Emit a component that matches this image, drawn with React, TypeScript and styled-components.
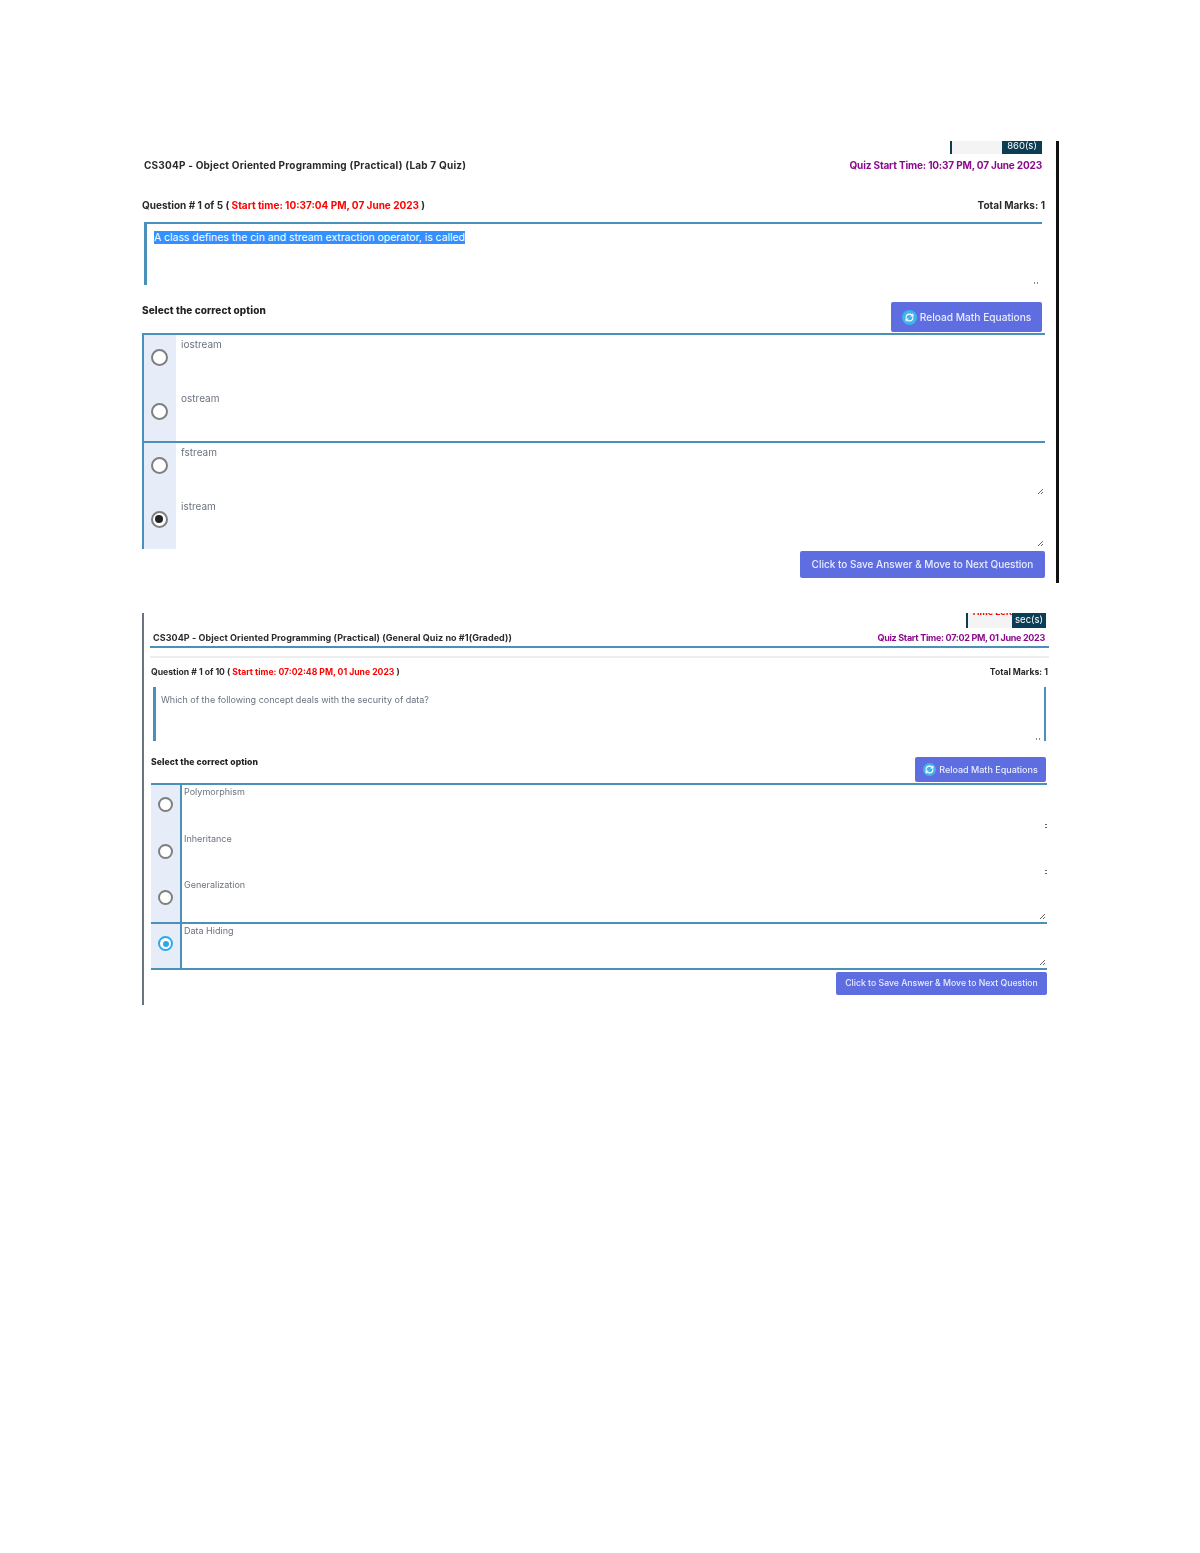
import React from 'react';
import styled, {createGlobalStyle, ThemeProvider} from 'styled-components';
import {RefreshCw} from 'lucide-react';

const GlobalStyle = createGlobalStyle`
  html, body {
    margin: 0;
    padding: 0;
    background: #fff;
  }
  body {
    font-family: Inter, "Noto Sans", "Liberation Sans", sans-serif;
  }
`;

const BLUE = '#4a90b8';

const Page = styled.div`
  box-sizing: border-box;
  width: 1200px;
  height: 1553px;
  padding: 141px 0 0 142px;
  filter: blur(0.55px);
`;

const Panel = styled.section`
  box-sizing: border-box;
  width: ${(p) => p.theme.width}px;
  height: ${(p) => p.theme.height}px;
  margin-bottom: 30px;
  border-left: ${(p) => p.theme.panelLeft};
  border-right: ${(p) => p.theme.panelRight};
`;

const TagRow = styled.div`
  display: flex;
  justify-content: flex-end;
  height: ${(p) => p.theme.tagH}px;
  padding-right: ${(p) => p.theme.tagRight}px;
`;
const Tag = styled.div`
  display: flex;
  overflow: hidden;
  width: ${(p) => p.theme.tagW}px;
  border-left: 2px solid #0b3d55;
  background: #f4f4f4;
`;
const TagHint = styled.span`
  flex: 1;
  margin-top: -6.5px;
  padding-left: 3px;
  font-size: 9px;
  line-height: 10px;
  font-weight: 700;
  color: #f00;
  white-space: nowrap;
`;
const TagValue = styled.span`
  width: ${(p) => p.theme.tagValueW}px;
  background: #0b3d55;
  color: #fff;
  font-size: 9.5px;
  line-height: ${(p) => p.theme.tagLine}px;
  text-align: center;
`;

const TitleRow = styled.div`
  display: flex;
  justify-content: space-between;
  align-items: center;
  box-sizing: border-box;
  height: ${(p) => p.theme.titleH}px;
  margin-left: ${(p) => p.theme.titleLeft}px;
  padding: ${(p) => p.theme.titlePad};
  border-bottom: ${(p) => p.theme.titleLine};
`;
const Title = styled.div`
  font-size: ${(p) => p.theme.titleSize}px;
  font-weight: 700;
  letter-spacing: ${(p) => p.theme.titleTrack}px;
  color: #2a2a2a;
  white-space: nowrap;
`;
const QuizTime = styled.div`
  font-size: ${(p) => p.theme.titleSize}px;
  font-weight: 700;
  letter-spacing: ${(p) => p.theme.timeTrack}px;
  color: #8b0a8b;
  white-space: nowrap;
`;
const Rule = styled.div`
  display: ${(p) => p.theme.ruleShow};
  height: 2px;
  margin: 8px 0 0 6px;
  background: #eeeeee;
`;

const QuestionRow = styled.div`
  display: flex;
  justify-content: space-between;
  align-items: center;
  height: 16px;
  margin: ${(p) => p.theme.questionMargin};
  font-size: ${(p) => p.theme.questionSize}px;
  font-weight: 700;
  color: #2a2a2a;
  white-space: nowrap;
`;
const StartTime = styled.span`
  color: #f00;
`;

const QuestionBox = styled.div`
  position: relative;
  box-sizing: border-box;
  height: ${(p) => p.theme.boxH}px;
  margin: ${(p) => p.theme.boxMargin};
  padding: ${(p) => p.theme.boxPad};
  border-left: 3px solid ${BLUE};
  border-top: ${(p) => p.theme.boxTop};
  border-right: ${(p) => p.theme.boxRight};
  font-size: ${(p) => p.theme.boxSize}px;
  line-height: 14px;
  color: #6b7280;
`;
const Selected = styled.span`
  background: #3390ff;
  color: #fff;
`;

const SelectRow = styled.div`
  display: flex;
  justify-content: space-between;
  align-items: flex-start;
  height: ${(p) => p.theme.selectH}px;
  margin: ${(p) => p.theme.selectMargin};
`;
const SelectLabel = styled.div`
  font-size: ${(p) => p.theme.questionSize}px;
  font-weight: 800;
  letter-spacing: 0.08px;
  line-height: ${(p) => p.theme.selectLine}px;
  color: #222;
`;
const Button = styled.button`
  display: flex;
  align-items: center;
  justify-content: center;
  box-sizing: border-box;
  padding: 0;
  border: 0;
  border-radius: 2px;
  background: #5e6ee0;
  color: #e8ecff;
  font-family: inherit;
  font-weight: 500;
  white-space: nowrap;
`;
const ReloadButton = styled(Button)`
  gap: 3px;
  width: ${(p) => p.theme.reloadW}px;
  height: ${(p) => p.theme.selectH}px;
  font-size: ${(p) => p.theme.reloadSize}px;
`;
const ReloadIcon = styled.span`
  display: flex;
  align-items: center;
  justify-content: center;
  width: ${(p) => p.theme.reloadIcon}px;
  height: ${(p) => p.theme.reloadIcon}px;
  border-radius: 50%;
  background: #3fb4ec;
  color: #fff;
`;

const Options = styled.div`
  margin: ${(p) => p.theme.optionsMargin};
  border-bottom: ${(p) => p.theme.optionsBottom};
`;
const Group = styled.div`
  border-top: 2px solid ${BLUE};
`;
const Row = styled.div<{$h: number}>`
  position: relative;
  display: flex;
  height: ${(p) => p.$h}px;
`;
const RadioCell = styled.div`
  display: flex;
  justify-content: center;
  box-sizing: border-box;
  flex: none;
  width: ${(p) => p.theme.cellW}px;
  padding: ${(p) => p.theme.cellPad};
  background: #e7edf8;
  border-left: ${(p) => p.theme.cellLeft};
  border-right: ${(p) => p.theme.cellRight};
`;
const Radio = styled.span<{$on?: boolean; $accent?: string}>`
  position: relative;
  box-sizing: border-box;
  width: ${(p) => p.theme.radioSize}px;
  height: ${(p) => p.theme.radioSize}px;
  border: 2px solid ${(p) => p.$accent || '#7f7f7f'};
  border-radius: 50%;
  background: #fff;
  &::after {
    content: '';
    display: ${(p) => (p.$on ? 'block' : 'none')};
    position: absolute;
    inset: 2.5px;
    border-radius: 50%;
    background: ${(p) => p.$accent || '#222'};
  }
`;
const OptionText = styled.div`
  padding: ${(p) => p.theme.optionPad};
  font-size: ${(p) => p.theme.bodySize}px;
  line-height: 14px;
  color: #6b7280;
`;
const Grip = styled.svg`
  position: absolute;
  right: 1px;
  bottom: 2px;
  width: 7px;
  height: 7px;
  stroke: #666;
  stroke-width: 1;
`;
const Dots = styled.span`
  position: absolute;
  right: 0;
  bottom: 3px;
  width: 2px;
  height: 6px;
  background: radial-gradient(circle, #666 1px, transparent 1px) 0 0 / 2px 3px;
`;
const BoxGrip = styled.span`
  position: absolute;
  right: 3px;
  bottom: 1px;
  width: 6px;
  height: 2px;
  background: radial-gradient(circle, #888 1px, transparent 1px) 0 0 / 3px 2px;
`;

const SaveRow = styled.div`
  display: flex;
  justify-content: flex-end;
  margin: ${(p) => p.theme.saveMargin};
`;
const SaveButton = styled(Button)`
  width: ${(p) => p.theme.saveW}px;
  height: ${(p) => p.theme.saveH}px;
  padding-bottom: 2px;
  font-size: ${(p) => p.theme.saveSize}px;
`;

const firstLayout = {
  width: 917, height: 442, panelLeft: 'none', panelRight: '3px solid #111',
  tagH: 13, tagRight: 14, tagW: 90, tagValueW: 40, tagLine: 9,
  titleH: 21, titleLeft: 0, titlePad: '0 14px 0 2px', titleLine: 'none', titleSize: 10, titleTrack: 0.21, timeTrack: -0.16,
  ruleShow: 'none',
  questionMargin: '22px 11px 0 0', questionSize: 10,
  boxH: 63, boxMargin: '9px 14px 0 2px', boxPad: '7px 0 0 7px', boxTop: `2px solid ${BLUE}`, boxRight: 'none', boxSize: 10.4, bodySize: 10,
  selectH: 30, selectMargin: '17px 14px 0 0', selectLine: 16, reloadW: 151, reloadSize: 10.2, reloadIcon: 15,
  optionsMargin: '1px 11px 0 0', optionsBottom: 'none',
  cellW: 34, cellPad: '14px 2px 0 0', radioSize: 17, cellLeft: `2px solid ${BLUE}`, cellRight: 'none',
  optionPad: '2px 0 0 5px',
  saveMargin: '2px 11px 0 0', saveW: 245, saveH: 27, saveSize: 10,
};

const secondLayout = {
  width: 907, height: 392, panelLeft: '2px solid #6b7280', panelRight: 'none',
  tagH: 15, tagRight: 3, tagW: 78, tagValueW: 34, tagLine: 13,
  titleH: 20, titleLeft: 6, titlePad: '0 4px 0 3px', titleLine: `2px solid ${BLUE}`, titleSize: 9, titleTrack: 0.07, timeTrack: -0.3,
  ruleShow: 'block',
  questionMargin: '6px 1px 0 7px', questionSize: 8.65,
  boxH: 54, boxMargin: '7px 3px 0 9px', boxPad: '6px 0 0 5px', boxTop: 'none', boxRight: `2px solid ${BLUE}`, boxSize: 9, bodySize: 9,
  selectH: 25, selectMargin: '16px 3px 0 7px', selectLine: 11, reloadW: 131, reloadSize: 9, reloadIcon: 13,
  optionsMargin: '1px 2px 0 7px', optionsBottom: `2px solid ${BLUE}`,
  cellW: 31, cellPad: '12px 0 0 0', radioSize: 15, cellLeft: 'none', cellRight: `2px solid ${BLUE}`,
  optionPad: '0 0 0 2px',
  saveMargin: '2px 2px 0 0', saveW: 211, saveH: 23, saveSize: 8.7,
};

type Option = {label: string; h: number; on?: boolean; accent?: string; mark?: 'grip' | 'dots'};

type Quiz = {
  layout: typeof firstLayout;
  tagHint?: string;
  tagValue: string;
  title: string;
  quizTime: string;
  progress: string;
  startTime: string;
  question: React.ReactNode;
  groups: Option[][];
};

const quizzes: Quiz[] = [
  {
    layout: firstLayout,
    tagValue: '860(s)',
    title: 'CS304P - Object Oriented Programming (Practical) (Lab 7 Quiz)',
    quizTime: 'Quiz Start Time: 10:37 PM, 07 June 2023',
    progress: 'Question # 1 of 5',
    startTime: 'Start time: 10:37:04 PM, 07 June 2023',
    question: <Selected>A class defines the cin and stream extraction operator, is called</Selected>,
    groups: [
      [
        {label: 'iostream', h: 53.5},
        {label: 'ostream', h: 52.5},
      ],
      [
        {label: 'fstream', h: 53.5, mark: 'grip'},
        {label: 'istream', h: 52.5, on: true, mark: 'grip'},
      ],
    ],
  },
  {
    layout: secondLayout,
    tagHint: 'Time Left',
    tagValue: 'sec(s)',
    title: 'CS304P - Object Oriented Programming (Practical) (General Quiz no #1(Graded))',
    quizTime: 'Quiz Start Time: 07:02 PM, 01 June 2023',
    progress: 'Question # 1 of 10',
    startTime: 'Start time: 07:02:48 PM, 01 June 2023',
    question: 'Which of the following concept deals with the security of data?',
    groups: [
      [
        {label: 'Polymorphism', h: 46.5, mark: 'dots'},
        {label: 'Inheritance', h: 46.5, mark: 'dots'},
        {label: 'Generalization', h: 44, mark: 'grip'},
      ],
      [{label: 'Data Hiding', h: 44, on: true, accent: '#2fa8e8', mark: 'grip'}],
    ],
  },
];

const QuizPanel = ({quiz}: {quiz: Quiz}) => (
  <ThemeProvider theme={quiz.layout}>
    <Panel>
      <TagRow>
        <Tag>
          <TagHint>{quiz.tagHint}</TagHint>
          <TagValue>{quiz.tagValue}</TagValue>
        </Tag>
      </TagRow>
      <TitleRow>
        <Title>{quiz.title}</Title>
        <QuizTime>{quiz.quizTime}</QuizTime>
      </TitleRow>
      <Rule />
      <QuestionRow>
        <span>
          {quiz.progress} ( <StartTime>{quiz.startTime}</StartTime> )
        </span>
        <span>Total Marks: 1</span>
      </QuestionRow>
      <QuestionBox>
        {quiz.question}
        <BoxGrip />
      </QuestionBox>
      <SelectRow>
        <SelectLabel>Select the correct option</SelectLabel>
        <ReloadButton>
          <ReloadIcon>
            <RefreshCw size={9} strokeWidth={3} />
          </ReloadIcon>
          Reload Math Equations
        </ReloadButton>
      </SelectRow>
      <Options>
        {quiz.groups.map((group, i) => (
          <Group key={i}>
            {group.map((option) => (
              <Row key={option.label} $h={option.h}>
                <RadioCell>
                  <Radio $on={option.on} $accent={option.accent} />
                </RadioCell>
                <OptionText>{option.label}</OptionText>
                {option.mark === 'grip' && (
                  <Grip viewBox="0 0 7 7">
                    <path d="M1 6 L6 1 M4 6 L6 4" />
                  </Grip>
                )}
                {option.mark === 'dots' && <Dots />}
              </Row>
            ))}
          </Group>
        ))}
      </Options>
      <SaveRow>
        <SaveButton>Click to Save Answer &amp; Move to Next Question</SaveButton>
      </SaveRow>
    </Panel>
  </ThemeProvider>
);

export default function App() {
  return (
    <>
      <GlobalStyle />
      <Page>
        {quizzes.map((quiz) => (
          <QuizPanel key={quiz.title} quiz={quiz} />
        ))}
      </Page>
    </>
  );
}
